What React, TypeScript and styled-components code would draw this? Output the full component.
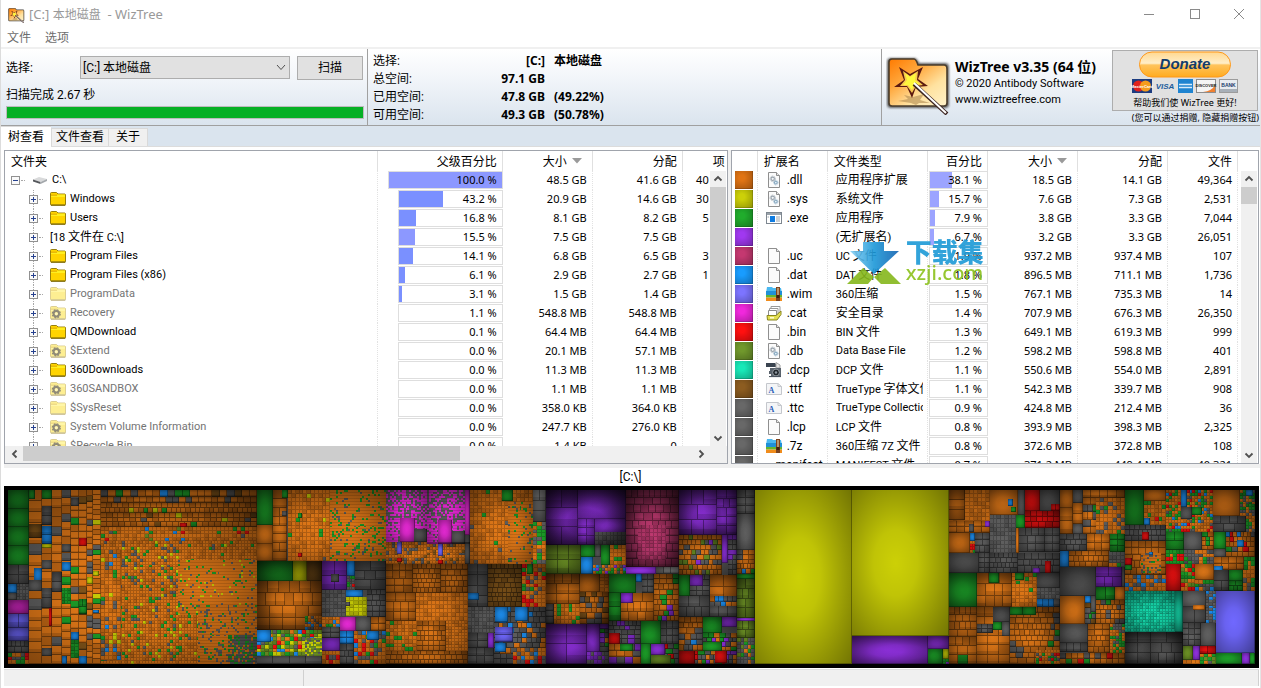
import React, { useMemo } from "react";
import styled, { createGlobalStyle } from "styled-components";

const UI = 'Roboto, "Noto Sans CJK SC", sans-serif';
const WIDE = '"Noto Sans", "Noto Sans CJK SC", sans-serif';

const Global = createGlobalStyle`
  * { box-sizing: border-box; }
  html, body { margin: 0; padding: 0; background: #fff; }
  body { font-family: ${UI}; font-size: 11px; line-height: 18px; color: #000; }
  button, select { font: inherit; color: inherit; }
`;

/* ---------- mixed Latin / Han text ---------- */

const Han = styled.span`
  font-size: 12px;
`;

function Label({ text }: { text: string }) {
  const parts = text.split(/([\u4e00-\u9fff]+)/);
  return (
    <>
      {parts.map((p, i) => (i % 2 ? <Han key={i}>{p}</Han> : p))}
    </>
  );
}

/* ---------- window frame ---------- */

const Window = styled.div`
  display: flex;
  flex-direction: column;
  height: 100vh;
  min-height: 560px;
  overflow: hidden;
  border-left: 1px solid #dcdcdc;
  border-right: 1px solid #e4e4e4;
  background: #fff;
`;

const TitleBar = styled.header`
  display: flex;
  align-items: center;
  flex: none;
  height: 28px;
  padding-left: 7px;
  color: #999;
`;

const TitleText = styled.h1`
  flex: 1;
  margin: 0 0 0 4px;
  font-family: ${WIDE};
  font-size: 13px;
  font-weight: 400;
  white-space: pre;
`;

const WinButton = styled.button`
  display: flex;
  align-items: center;
  justify-content: center;
  width: 46px;
  height: 28px;
  padding: 0;
  border: 0;
  background: none;
  &:last-child { width: 42px; }
`;

const MenuBar = styled.nav`
  display: flex;
  flex: none;
  gap: 14px;
  height: 21px;
  padding-left: 6px;
  border-bottom: 2px solid #f0f0f0;
`;

const MenuItem = styled.button`
  padding: 0;
  border: 0;
  background: none;
  color: #6d6d6d;
  font-size: 12px;
  line-height: 20px;
`;

/* ---------- information strip ---------- */

const InfoStrip = styled.section`
  display: flex;
  flex: none;
  height: 77px;
  border-bottom: 1px solid #a0a0a0;
  background: linear-gradient(#fff 0%, #f3f6fa 35%, #dae4ee 100%);
`;

const ScanPane = styled.div`
  display: flex;
  flex-direction: column;
  width: 367px;
  padding: 7px 3px 0 5px;
  border-right: 1px solid #a0a0a0;
`;

const ScanRow = styled.div`
  display: flex;
  align-items: center;
  height: 23px;
  font-size: 12px;
`;

const ScanLabel = styled.label`
  width: 74px;
`;

const SelectWrap = styled.div`
  position: relative;
  display: flex;
  width: 210px;
  margin-right: 7px;
`;

const DriveSelect = styled.select`
  appearance: none;
  width: 100%;
  height: 23px;
  padding: 0 2px;
  border: 1px solid #adadad;
  border-radius: 0;
  background: #e1e1e1;
  font-size: 12px;
`;

const SelectArrow = styled.svg`
  position: absolute;
  right: 4px;
  top: 8px;
  pointer-events: none;
`;

const ScanButton = styled.button`
  width: 66px;
  height: 24px;
  padding: 0;
  border: 1px solid #adadad;
  background: #e1e1e1;
  font-size: 12px;
`;

const ScanStatus = styled.div`
  margin-top: 7px;
  height: 20px;
  font-size: 12px;
`;

const Progress = styled.div`
  height: 13px;
  width: 358px;
  border: 1px solid #bcbcbc;
  background: #06b025;
`;

const SpacePane = styled.dl`
  display: grid;
  grid-template-columns: 80px 92px 1fr;
  grid-auto-rows: 18px;
  flex: 1;
  margin: 0;
  padding: 3px 0 0 5px;
  font-size: 12px;
`;

const SpaceLabel = styled.dt`
  margin: 0;
`;

const SpaceValue = styled.dd<{ $right?: boolean }>`
  margin: 0;
  padding-left: ${(p) => (p.$right ? 0 : 9)}px;
  text-align: ${(p) => (p.$right ? "right" : "left")};
  font-family: ${WIDE};
  font-size: 12px;
  font-weight: 700;
`;

const AboutPane = styled.div`
  display: flex;
  width: 379px;
  padding-left: 4px;
  border-left: 1px solid #a0a0a0;
`;

const AboutText = styled.div`
  flex: 1;
  padding: 9px 0 0 3px;
  white-space: nowrap;
`;

const AboutTitle = styled.h2`
  margin: 0;
  font-family: ${WIDE};
  font-size: 14px;
  line-height: 18px;
`;

const AboutLine = styled.a`
  display: block;
  color: #000;
  font-size: 11px;
  line-height: 16px;
  text-decoration: none;
`;

const DonatePane = styled.div`
  display: flex;
  flex-direction: column;
  align-items: flex-end;
  width: 148px;
  padding-top: 1px;
  font-family: ${WIDE};
  font-size: 9px;
`;

const DonateButton = styled.button`
  display: flex;
  flex-direction: column;
  align-items: center;
  width: 146px;
  height: 61px;
  margin-right: 2px;
  padding: 0;
  border: 1px solid #adadad;
  background: #e1e1e1;
  font-size: 9px;
  line-height: 14px;
`;

const DonateNote = styled.div`
  margin-right: 1px;
  line-height: 13px;
  white-space: nowrap;
`;

/* ---------- tabs ---------- */

const Tabs = styled.div`
  display: flex;
  align-items: flex-end;
  flex: none;
  height: 21px;
  border-bottom: 1px solid #dcdcdc;
  background: #dae4ee;
`;

const Tab = styled.button<{ $active?: boolean }>`
  height: ${(p) => (p.$active ? 21 : 18)}px;
  margin-bottom: ${(p) => (p.$active ? -1 : 0)}px;
  padding: ${(p) => (p.$active ? "0 7px" : "0 4px")};
  min-width: 40px;
  border: 1px solid #d9d9d9;
  border-left-width: ${(p) => (p.$active ? 0 : 1)}px;
  border-right-width: 0;
  border-bottom: 0;
  background: ${(p) => (p.$active ? "#fff" : "#f0f0f0")};
  font-size: 12px;
  line-height: 17px;
  &:last-child { border-right-width: 1px; }
`;

/* ---------- tables ---------- */

const Panels = styled.main`
  display: flex;
  flex: 1;
  gap: 3px;
  min-height: 0;
  margin: 3px 1px 0 3px;
  background: #f0f0f0;
`;

const Panel = styled.section<{ $grow: number }>`
  display: flex;
  flex-direction: column;
  flex: ${(p) => p.$grow} 1 0;
  min-width: 0;
  border: 1px solid #a0a4ac;
  background: #fff;
`;

const Viewport = styled.div`
  position: relative;
  flex: 1;
  min-height: 0;
  overflow: hidden;
`;

const Grid = styled.table`
  width: 100%;
  table-layout: fixed;
  border-collapse: separate;
  border-spacing: 0;
`;

const Head = styled.th<{ $right?: boolean; $pad?: number }>`
  height: 20px;
  padding: 2px ${(p) => (p.$right ? p.$pad ?? 5 : 0)}px 0 ${(p) => (p.$right ? 0 : p.$pad ?? 6)}px;
  border-right: 1px solid #e0e0e0;
  text-align: ${(p) => (p.$right ? "right" : "left")};
  vertical-align: top;
  font-size: 12px;
  font-weight: 400;
  line-height: 18px;
  white-space: nowrap;
  &:last-child { border-right: 0; }
`;

const SortArrow = styled.svg`
  margin: 0 5px 2px 5px;
`;

const Cell = styled.td<{ $right?: boolean; $pad?: number }>`
  height: 19px;
  padding: 0 ${(p) => (p.$right ? p.$pad ?? 5 : 4)}px 0 ${(p) => (p.$right ? 0 : p.$pad ?? 5)}px;
  border-right: 1px dotted #e2e2e2;
  text-align: ${(p) => (p.$right ? "right" : "left")};
  vertical-align: top;
  line-height: 18px;
  white-space: nowrap;
  overflow: hidden;
  &:last-child { border-right: 0; }
`;

const Clip = styled.div`
  height: 18px;
  overflow: hidden;
`;

const TreeCell = styled(Cell)<{ $child?: boolean }>`
  padding-left: ${(p) => (p.$child ? 24 : 6)}px;
  background: ${(p) =>
    p.$child
      ? "repeating-linear-gradient(to bottom, #a8a8a8 0 1px, transparent 1px 2px) 28px 0 / 1px 100% no-repeat"
      : "none"};
`;

const TreeRow = styled.div<{ $dim?: boolean }>`
  display: flex;
  align-items: center;
  gap: 4px;
  height: 18px;
  color: ${(p) => (p.$dim ? "#747474" : "#000")};
`;

const Toggle = styled.button`
  display: flex;
  padding: 0;
  border: 0;
  background: none;
`;

const Dots = styled.span`
  width: 4px;
  margin: 0 3px 0 -3px;
  border-top: 1px dotted #a8a8a8;
`;

const BarCell = styled.td<{ $indent?: number }>`
  height: 19px;
  padding: 0 0 1px ${(p) => p.$indent ?? 1}px;
  vertical-align: top;
`;

const Bar = styled.div`
  position: relative;
  height: 18px;
  border: 1px solid #dedede;
  background: #fff;
  line-height: 16px;
  text-align: right;
`;

const BarFill = styled.div<{ $color: string }>`
  position: absolute;
  left: 0;
  top: 0;
  height: 16px;
  background: ${(p) => p.$color};
`;

const BarText = styled.span`
  position: relative;
  padding-right: 5px;
  font-family: ${WIDE};
`;

const Num = styled.span`
  font-family: ${WIDE};
`;

const Swatch = styled.div<{ $color: string }>`
  width: 18px;
  height: 18px;
  background: radial-gradient(circle at 40% 40%, transparent 20%, rgba(0, 0, 0, 0.28)) ${(p) => p.$color};
  border-right: 1px solid rgba(0, 0, 0, 0.25);
  border-bottom: 1px solid rgba(0, 0, 0, 0.25);
`;

const ExtRow = styled.div`
  display: flex;
  align-items: center;
  gap: 5px;
  height: 18px;
  font-size: 12px;
`;

const VScroll = styled.div`
  position: absolute;
  right: 1px;
  top: 20px;
  bottom: 0;
  display: flex;
  flex-direction: column;
  width: 16px;
  background: #f0f0f0;
`;

const HScroll = styled.div`
  display: flex;
  flex: none;
  height: 17px;
  padding: 0 18px 2px 2px;
  background: #f0f0f0;
`;

const ScrollButton = styled.button`
  display: flex;
  flex: none;
  align-items: center;
  justify-content: center;
  width: 16px;
  height: 16px;
  padding: 0;
  border: 0;
  background: none;
`;

const Thumb = styled.div<{ $grow: number }>`
  flex: ${(p) => p.$grow} 1 0;
  background: #cdcdcd;
`;

const Rest = styled.div<{ $grow: number }>`
  flex: ${(p) => p.$grow} 1 0;
`;

/* ---------- watermark ---------- */

const Watermark = styled.div`
  position: absolute;
  left: 115px;
  top: 90px;
  display: flex;
  gap: 5px;
  opacity: 0.9;
  pointer-events: none;
`;

const MarkWords = styled.div`
  color: #1c9ad6;
  font-size: 26px;
  font-weight: 900;
  line-height: 24px;
`;

const MarkSite = styled.div`
  color: #8cc21c;
  font-family: ${WIDE};
  font-size: 20px;
  font-weight: 500;
  line-height: 16px;
`;

/* ---------- treemap and status ---------- */

const Splitter = styled.div`
  flex: none;
  height: 4px;
  margin-left: 3px;
  background: #f0f0f0;
`;

const PathLabel = styled.div`
  flex: none;
  height: 18px;
  font-size: 12px;
  text-align: center;
`;

const MapFrame = styled.section`
  flex: none;
  height: 182px;
  margin: 0 1px 0 3px;
  padding: 4px;
  background: #000;
  svg { display: block; width: 100%; height: 100%; }
`;

const StatusBar = styled.footer`
  display: flex;
  flex: none;
  height: 17px;
  margin: 1px 1px 2px 3px;
  border-top: 1px solid #e0e0e0;
  background: #f0f0f0;
`;

const StatusCell = styled.div<{ $wide?: boolean }>`
  flex: ${(p) => (p.$wide ? "1" : "0 0 300px")};
  border-right: 1px solid #d0d0d0;
`;

/* ---------- icons ---------- */

type Dir = "up" | "down" | "left" | "right";
const CHEVRON: Record<Dir, string> = {
  up: "M1.5 6.5 L5 3 L8.5 6.5",
  down: "M1.5 3.5 L5 7 L8.5 3.5",
  left: "M6.5 1.5 L3 5 L6.5 8.5",
  right: "M3.5 1.5 L7 5 L3.5 8.5",
};

function Chevron({ dir }: { dir: Dir }) {
  return (
    <svg width="10" height="10" viewBox="0 0 10 10" fill="none" stroke="#505050" strokeWidth="1.8">
      <path d={CHEVRON[dir]} />
    </svg>
  );
}

function Sort() {
  return (
    <SortArrow width="10" height="6" viewBox="0 0 10 6">
      <path d="M0 0 H10 L5 5.5 Z" fill="#9a9a9a" />
    </SortArrow>
  );
}

function ToggleBox({ open }: { open?: boolean }) {
  return (
    <Toggle aria-label={open ? "收起" : "展开"}>
      <svg width="9" height="9" viewBox="0 0 9 9" shapeRendering="crispEdges">
        <rect x="0.5" y="0.5" width="8" height="8" fill="#fafafa" stroke="#919191" />
        <path d={open ? "M2 4.5 H7" : "M2 4.5 H7 M4.5 2 V7"} stroke="#26418f" />
      </svg>
    </Toggle>
  );
}

type FolderKind = "drive" | "folder" | "pale" | "system" | "none";

function FolderIcon({ kind }: { kind: FolderKind }) {
  if (kind === "none") return null;
  if (kind === "drive")
    return (
      <svg width="16" height="14" viewBox="0 0 16 14">
        <path d="M1 6.5 L7 4 L15 6 L8.5 9 Z" fill="#d9dadb" />
        <path d="M1 6.5 L8.5 9 V11 L1 8.5 Z" fill="#55585c" />
        <path d="M8.5 9 L15 6 V8 L8.5 11 Z" fill="#a4a8ac" />
      </svg>
    );
  const pale = kind !== "folder";
  return (
    <svg width="16" height="14" viewBox="0 0 16 14">
      <path
        d="M0.5 1.5 Q0.5 0.5 1.5 0.5 H6.5 L8 2 H15 L15.5 2.5 V12.5 L15 13.3 H1 L0.5 12.5 Z"
        fill={pale ? "#fdee92" : "#ffd400"}
        stroke={pale ? "#d8c98c" : "#8c7400"}
        strokeWidth="0.9"
      />
      <path d="M1 3.4 H6.8 L8.2 2.4 H15 V5 H1 Z" fill={pale ? "#fff6a8" : "#ffee20"} />
      <path d="M1 3.2 H7" stroke={pale ? "#e2c978" : "#d89c00"} strokeWidth="0.8" />
      <path d="M1 13 H15.4" stroke={pale ? "#b8b09a" : "#6a5a10"} strokeWidth="0.9" />
      {kind === "system" && (
        <g>
          <circle cx="6.3" cy="7.8" r="2.7" fill="none" stroke="#8f8a78" strokeWidth="2" />
          <circle cx="6.3" cy="7.8" r="4" fill="none" stroke="#8f8a78" strokeWidth="1.2" strokeDasharray="1.8 1.34" />
          <circle cx="6.3" cy="7.8" r="1.4" fill="#fff6c0" />
        </g>
      )}
    </svg>
  );
}

type FileKind = "gear" | "exe" | "page" | "zip" | "cat" | "dcp" | "font" | "none";

function FileIcon({ kind }: { kind: FileKind }) {
  const page = (
    <>
      <path d="M2.5 0.5 H10.5 L13.5 3.5 V15.5 H2.5 Z" fill="#fbfbfb" stroke="#8f8f8f" />
      <path d="M10.5 0.5 V3.5 H13.5" fill="#e6e6e6" stroke="#8f8f8f" />
    </>
  );
  return (
    <svg width="16" height="16" viewBox="0 0 16 16">
      {kind === "page" && page}
      {kind === "gear" && (
        <>
          {page}
          <circle cx="6.7" cy="6.8" r="1.7" fill="#f4f7f9" stroke="#98a2ac" strokeWidth="1.1" />
          <circle cx="6.7" cy="6.8" r="2.7" fill="none" stroke="#98a2ac" strokeWidth="0.8" strokeDasharray="1 0.7" />
          <circle cx="9.8" cy="10.6" r="1.4" fill="#e6f2fa" stroke="#86a8c0" strokeWidth="1.1" />
          <circle cx="9.8" cy="10.6" r="2.3" fill="none" stroke="#86a8c0" strokeWidth="0.7" strokeDasharray="0.9 0.6" />
        </>
      )}
      {kind === "exe" && (
        <>
          <rect x="0.5" y="2.5" width="15" height="11" fill="#fff" stroke="#7e8790" />
          <path d="M1 4 H15" stroke="#9aa3ab" strokeWidth="2" />
          <rect x="4" y="6" width="5" height="6" fill="#0f7be0" />
          <path d="M10 7 H14 M10 9 H14 M10 11 H14" stroke="#9aa3ab" />
          <path d="M1.5 7 H3" stroke="#9aa3ab" />
        </>
      )}
      {kind === "zip" && (
        <>
          <path d="M1 1 H6 L7 2 H15 L16 7 H0 Z" fill="#4ab8f0" />
          <path d="M0 5 H16 V9 H0 Z" fill="#1f90d8" />
          <rect x="0" y="9" width="16" height="2.6" fill="#63b532" />
          <rect x="0" y="11.6" width="16" height="3.4" fill="#f08c1c" />
          <rect x="10" y="1" width="4" height="14" fill="#7c4420" />
          <rect x="11.2" y="2" width="1.6" height="7" fill="#c8a880" />
          <rect x="10.4" y="9" width="3.2" height="3" fill="#40200c" />
        </>
      )}
      {kind === "cat" && (
        <>
          <path d="M5 1.5 H14 V8 H5 Z" fill="#fff" stroke="#9a9a9a" />
          <path d="M3.5 3.5 H12 V10 H3.5 Z" fill="#fff" stroke="#9a9a9a" />
          <path d="M2.5 5.5 H10.5 V12 H2.5 Z" fill="#fff" stroke="#8c8c8c" />
          <path d="M1 10.5 H10 L15 6 V9.5 L11 15 H1.5 Z" fill="#e4e050" stroke="#8a8620" />
          <path d="M4 12.8 H8" stroke="#fffde0" strokeWidth="1.4" />
        </>
      )}
      {kind === "dcp" && (
        <>
          <path d="M0 1 H9 L11 3 V5 H0 Z" fill="#3a4450" />
          <path d="M10 0.5 L14 3 V6 H10 Z" fill="#e4e4e4" stroke="#a0a0a0" />
          <path d="M4 6 H15 V14 H5 V12 H3 V9 H4 Z" fill="#59626c" />
          <circle cx="10" cy="10.5" r="3.4" fill="#20262c" stroke="#aab0b6" strokeWidth="0.8" />
          <circle cx="10" cy="10.5" r="1.2" fill="#8d969e" />
          <path d="M3 14.6 H15" stroke="#3a4450" />
        </>
      )}
      {kind === "font" && (
        <>
          <path d="M0.5 2.5 H12 L15.5 5.5 V13.5 H0.5 Z" fill="#f4f5f7" stroke="#c4c7cc" />
          <path d="M12 2.5 V5.5 H15.5" fill="none" stroke="#c4c7cc" />
          <text x="2.6" y="12" fontFamily="Liberation Serif, serif" fontSize="8" fontWeight="700" fill="#2a5cb8">
            A
          </text>
        </>
      )}
    </svg>
  );
}

function WizLogo({ size }: { size: number }) {
  return (
    <svg width={size} height={size} viewBox="0 0 66 66">
      <defs>
        <linearGradient id="folderFill" x1="0" y1="0" x2="0.9" y2="1">
          <stop offset="0" stopColor="#ff7a00" />
          <stop offset="0.35" stopColor="#ffa63a" />
          <stop offset="0.7" stopColor="#ffe2a0" />
          <stop offset="1" stopColor="#fff0c4" />
        </linearGradient>
        <filter id="soft" x="-20%" y="-20%" width="140%" height="140%">
          <feGaussianBlur stdDeviation="1.2" />
        </filter>
      </defs>
      <g transform="translate(0 5)">
        <path d="M1 8 Q1 4 5 4 H28 Q31 4 33 9 H59 Q63 9 63 13 V50 Q63 54 59 54 H5 Q1 54 1 50 Z" fill="#333" opacity="0.75" filter="url(#soft)" />
        <path
          d="M3 8 Q3 5 6 5 H28 Q30 5 32 11 H58 Q61 11 61 15 V49 Q61 52 58 52 H6 Q3 52 3 49 Z"
          fill="url(#folderFill)"
          stroke="#4a3c2c"
          strokeWidth="1.6"
        />
        <path d="M12 47 L22 45 L18 41 L27 43 L38 40 L34 46 L44 49 L33 49 L30 51 L25 49 Z" fill="#b08a50" opacity="0.6" />
        <path d="M13 13 L24 20 L37 13 L32 25 L42 32 L30 33 L26 44 L21 33 L8 33 L18 26 Z" fill="#5c1a10" />
        <path d="M17 17 L24 22 L32 17 L31 26 L37 31 L30 32 L26 39 L21 32 L14 32 L19 26 Z" fill="#f8c850" />
        <path d="M19 19 L24 23 L30 19 L29 26 L34 30 L28 31 L26 36 L22 31 L17 31 L21 26 Z" fill="#fff83c" />
        <path d="M28 30 L61 60" stroke="#3c2420" strokeWidth="4" />
        <path d="M28 29 L60 59" stroke="#fff" strokeWidth="2" />
      </g>
    </svg>
  );
}

function DonateBadge() {
  return (
    <svg width="108" height="45" viewBox="0 0 108 45">
      <defs>
        <linearGradient id="gold" x1="0" y1="0" x2="0" y2="1">
          <stop offset="0" stopColor="#ffd890" />
          <stop offset="0.45" stopColor="#ffeec8" />
          <stop offset="0.52" stopColor="#ffc45c" />
          <stop offset="1" stopColor="#ffab20" />
        </linearGradient>
      </defs>
      <rect x="8.5" y="1" width="91" height="25" rx="12.5" fill="url(#gold)" stroke="#ff9818" />
      <text x="54" y="18" textAnchor="middle" fontFamily="Liberation Sans, sans-serif" fontSize="15" fontWeight="700" fontStyle="italic" fill="#123c6c">
        Donate
      </text>
      <rect x="1" y="28" width="20" height="14" fill="#1c3c80" />
      <circle cx="7.5" cy="35" r="5.5" fill="#e0201c" />
      <circle cx="14.5" cy="35" r="5.5" fill="#f49c1c" />
      <text x="11" y="37" textAnchor="middle" fontFamily="Liberation Sans, sans-serif" fontSize="4" fontWeight="700" fill="#fff">MasterCard</text>
      <text x="34" y="38" textAnchor="middle" fontFamily="Liberation Sans, sans-serif" fontSize="8" fontWeight="700" fontStyle="italic" fill="#1c5c9c">VISA</text>
      <rect x="47" y="28" width="15" height="14" fill="#1f84d0" />
      <path d="M48 33.5 H61 M48 36.5 H61" stroke="#d8ecfa" strokeWidth="1.6" />
      <rect x="65.5" y="28.5" width="19" height="13" fill="#f4f4f4" stroke="#8c8c8c" />
      <path d="M72 41 Q81 40 84 34 V41 Z" fill="#f08030" />
      <text x="75" y="36" textAnchor="middle" fontFamily="Liberation Sans, sans-serif" fontSize="4" fontWeight="700" fill="#222">DISCOVER</text>
      <rect x="88.5" y="28.5" width="18" height="13" fill="#e8ecf0" stroke="#9c9c9c" />
      <path d="M89 39.5 H106" stroke="#a8b0b8" strokeWidth="3" />
      <text x="97.5" y="36" textAnchor="middle" fontFamily="Liberation Sans, sans-serif" fontSize="5" fontWeight="700" fill="#1c3c6c">BANK</text>
    </svg>
  );
}

/* ---------- data ---------- */

type Folder = [string, FolderKind, number, string, string, string];

const FOLDERS: Folder[] = [
  ["C:\\", "drive", 100, "48.5 GB", "41.6 GB", "40"],
  ["Windows", "folder", 43.2, "20.9 GB", "14.6 GB", "30"],
  ["Users", "folder", 16.8, "8.1 GB", "8.2 GB", "5"],
  ["[18 文件在 C:\\]", "none", 15.5, "7.5 GB", "7.5 GB", ""],
  ["Program Files", "folder", 14.1, "6.8 GB", "6.5 GB", "3"],
  ["Program Files (x86)", "folder", 6.1, "2.9 GB", "2.7 GB", "1"],
  ["ProgramData", "pale", 3.1, "1.5 GB", "1.4 GB", ""],
  ["Recovery", "system", 1.1, "548.8 MB", "548.8 MB", ""],
  ["QMDownload", "folder", 0.1, "64.4 MB", "64.4 MB", ""],
  ["$Extend", "system", 0, "20.1 MB", "57.1 MB", ""],
  ["360Downloads", "folder", 0, "11.3 MB", "11.3 MB", ""],
  ["360SANDBOX", "system", 0, "1.1 MB", "1.1 MB", ""],
  ["$SysReset", "pale", 0, "358.0 KB", "364.0 KB", ""],
  ["System Volume Information", "system", 0, "247.7 KB", "276.0 KB", ""],
  ["$Recycle.Bin", "system", 0, "1.4 KB", "0", ""],
];

type Ext = [string, FileKind, string, string, number, string, string, string];

const EXTS: Ext[] = [
  ["#e07414", "gear", ".dll", "应用程序扩展", 38.1, "18.5 GB", "14.1 GB", "49,364"],
  ["#ccd008", "gear", ".sys", "系统文件", 15.7, "7.6 GB", "7.3 GB", "2,531"],
  ["#20ac2c", "exe", ".exe", "应用程序", 7.9, "3.8 GB", "3.3 GB", "7,044"],
  ["#a038f0", "none", "", "(无扩展名)", 6.7, "3.2 GB", "3.3 GB", "26,051"],
  ["#c43870", "page", ".uc", "UC 文件", 1.9, "937.2 MB", "937.4 MB", "107"],
  ["#189cff", "page", ".dat", "DAT 文件", 1.8, "896.5 MB", "711.1 MB", "1,736"],
  ["#7c74ff", "zip", ".wim", "360压缩", 1.5, "767.1 MB", "735.3 MB", "14"],
  ["#f028dc", "cat", ".cat", "安全目录", 1.4, "707.9 MB", "676.3 MB", "26,350"],
  ["#ff1010", "page", ".bin", "BIN 文件", 1.3, "649.1 MB", "619.3 MB", "999"],
  ["#70982c", "gear", ".db", "Data Base File", 1.2, "598.2 MB", "598.8 MB", "401"],
  ["#18e8b8", "dcp", ".dcp", "DCP 文件", 1.1, "550.6 MB", "554.0 MB", "2,891"],
  ["#8c5c20", "font", ".ttf", "TrueType 字体文件", 1.1, "542.3 MB", "339.7 MB", "908"],
  ["#686868", "font", ".ttc", "TrueType Collection", 0.9, "424.8 MB", "212.4 MB", "36"],
  ["#686868", "page", ".lcp", "LCP 文件", 0.8, "393.9 MB", "398.3 MB", "2,325"],
  ["#686868", "zip", ".7z", "360压缩 7Z 文件", 0.8, "372.6 MB", "372.8 MB", "108"],
  ["#686868", "page", ".manifest", "MANIFEST 文件", 0.7, "371.2 MB", "449.4 MB", "40,321"],
];

const SPACE: [string, string, string][] = [
  ["选择:", "[C:]", "本地磁盘"],
  ["总空间:", "97.1 GB", ""],
  ["已用空间:", "47.8 GB", "(49.22%)"],
  ["可用空间:", "49.3 GB", "(50.78%)"],
];

/* ---------- treemap ---------- */

const HUES: Record<string, string> = {
  o: "#e47a18", g: "#1c9e28", k: "#606060", y: "#ccd006", p: "#8e30dc", r: "#c23a72",
  b: "#1c8cec", v: "#7068ff", m: "#ea2ad8", R: "#ec1010", l: "#6a8e24", t: "#16dcae", n: "#84561a",
};

/* x, y, width, height, hue, cell size, share of other cells, their hues */
type Block = [number, number, number, number, string, number?, number?, string?];

const BLOCKS: Block[] = [
  [0, 0, 21, 19, "g"], [0, 19, 21, 18, "g"], [0, 37, 21, 19, "g"], [0, 56, 21, 19, "g"],
  [0, 75, 21, 19, "k", 11], [9, 94, 12, 16, "k", 3], [0, 94, 9, 9, "b"], [0, 103, 9, 7, "k"],
  [0, 110, 21, 14, "m", 12], [0, 124, 21, 14, "v", 11], [0, 138, 21, 13, "v", 11], [0, 151, 21, 12, "k", 6],
  [0, 163, 21, 11, "o", 4, 0.5, "gkR"],
  [21, 0, 13, 174, "o", 11, 0.12, "kk"], [21, 0, 6, 9, "g"], [21, 34, 13, 14, "n", 12], [26, 78, 8, 13, "b"], [21, 90, 13, 11, "k"],
  [34, 0, 10, 174, "o", 9], [34, 0, 10, 9, "g"], [34, 16, 10, 19, "k", 9], [34, 36, 10, 18, "b", 9], [34, 54, 10, 4, "y"],
  [34, 70, 10, 9, "k"], [34, 98, 10, 20, "k", 9], [41, 118, 3, 18, "R"], [34, 158, 10, 8, "k"],
  [44, 0, 10, 174, "o", 9, 0.18, "k"], [44, 82, 10, 20, "k", 10],
  [54, 0, 9, 174, "o", 8, 0.15, "kg"], [54, 54, 9, 8, "k"], [54, 72, 9, 9, "b"], [54, 98, 9, 16, "g", 3], [54, 166, 5, 8, "b"],
  [63, 0, 8, 174, "o", 7, 0.25, "nkg"], [63, 8, 8, 8, "k"], [63, 142, 8, 8, "b"], [63, 150, 8, 18, "g", 4],
  [71, 0, 8, 174, "o", 7, 0.3, "kn"], [71, 48, 8, 8, "R"], [71, 109, 8, 15, "g", 7], [71, 166, 8, 8, "b"],
  [79, 0, 6, 174, "o", 6, 0.2, "knkk"], [79, 87, 6, 7, "y"],
  [85, 0, 8, 174, "o", 5, 0.16, "kgy"], [85, 81, 6, 5, "y"], [85, 120, 6, 3, "b"],
  [93, 0, 156, 7, "o", 7, 0.5, "kybgn"], [93, 7, 156, 6, "o", 6, 0.28, "kyn"], [93, 13, 156, 10, "o", 5, 0.1, "gyk"],
  [93, 23, 156, 14, "o", 5, 0.14, "gkykn"], [93, 37, 156, 14, "o", 4, 0.13, "gkRbl"],
  [93, 51, 156, 50, "o", 3, 0.17, "gkykgk"], [93, 101, 156, 73, "o", 3, 0.12, "gkyg"],
  [93, 60, 20, 110, "o", 4, 0.2, "gykbk"], [170, 70, 79, 55, "o", 2, 0.13, "gkgyk"], [190, 115, 59, 59, "o", 2, 0.2, "gkk"],
  [220, 145, 29, 29, "k", 2, 0.45, "og"], [172, 33, 7, 4, "R"],
  [249, 0, 16, 35, "g"], [249, 35, 16, 19, "o"], [249, 54, 16, 17, "o"], [265, 0, 14, 71, "o", 9], [274, 0, 6, 8, "g"], [274, 21, 5, 5, "k"],
  [280, 0, 46, 71, "o", 4, 0.05, "gyk"], [322, 0, 56, 71, "o", 2, 0.16, "gkg"],
  [290, 63, 4, 4, "R"], [290, 23, 4, 5, "g"],
  [249, 71, 36, 20, "g"], [285, 71, 14, 20, "y"], [299, 71, 15, 20, "n"],
  [249, 91, 65, 49, "o", 12], [297, 126, 17, 14, "o", 3, 0.4, "kgb"],
  [249, 140, 65, 26, "l", 4, 0.6, "obgyRky"], [249, 140, 14, 12, "b"], [297, 148, 17, 18, "l", 2, 0.4, "ky"], [249, 166, 65, 8, "k", 17],
  [314, 71, 25, 29, "p", 12], [323, 84, 8, 8, "k"], [339, 71, 8, 15, "b"], [339, 86, 8, 14, "k", 3, 0.3, "gR"], [347, 71, 31, 29, "k", 10],
  [314, 100, 24, 27, "k", 4], [338, 100, 17, 7, "b"], [338, 107, 21, 19, "y", 4], [338, 112, 4, 4, "k"], [359, 100, 19, 27, "k", 5],
  [314, 127, 18, 10, "o", 4, 0.2, "bg"], [332, 127, 16, 14, "m"], [348, 127, 15, 14, "k"], [363, 127, 15, 14, "o", 6],
  [314, 137, 18, 11, "k", 7], [314, 148, 18, 13, "p"], [314, 161, 18, 13, "o", 4, 0.4, "kR"],
  [332, 141, 14, 13, "b", 7], [332, 154, 14, 20, "k", 7], [346, 141, 32, 33, "o", 4, 0.5, "kbgkR"], [359, 141, 12, 9, "b"],
  [378, 0, 41, 30, "m", 2, 0.5, "kk"], [378, 30, 41, 22, "m", 2, 0.25, "kk"], [392, 28, 15, 24, "m"], [406, 39, 13, 13, "k"],
  [419, 0, 38, 30, "m", 2, 0.5, "kk"], [419, 30, 38, 24, "m", 2, 0.25, "kk"], [430, 30, 14, 24, "m"], [444, 41, 13, 13, "k"], [457, 0, 5, 45, "m"], [457, 45, 5, 29, "k"],
  [378, 52, 41, 22, "o", 3, 0.3, "knk"], [389, 52, 5, 12, "v"], [389, 68, 5, 4, "R"],
  [419, 54, 38, 20, "o", 3, 0.3, "knk"], [430, 54, 5, 12, "v"], [430, 70, 5, 4, "R"],
  [378, 74, 27, 29, "o", 8], [405, 74, 28, 29, "o", 5], [433, 74, 27, 29, "o", 6], [378, 103, 30, 28, "o", 9], [408, 103, 52, 28, "o", 4],
  [378, 131, 31, 30, "o", 4, 0.06, "g"], [409, 131, 29, 30, "o", 5, 0.06, "kg"], [438, 131, 22, 30, "o", 3], [378, 161, 82, 13, "o", 5, 0.08, "k"],
  [462, 0, 63, 74, "o", 4, 0.05, "gk"], [494, 0, 11, 11, "g"], [500, 12, 25, 62, "o", 2, 0.14, "gk"], [525, 0, 13, 32, "k", 10], [525, 32, 13, 42, "o", 4, 0.4, "gk"],
  [460, 74, 20, 43, "k", 10], [480, 74, 34, 43, "n", 5], [514, 74, 24, 43, "o", 4, 0.4, "gkR"], [519, 74, 6, 10, "g"], [460, 103, 11, 7, "b"],
  [460, 117, 26, 26, "k", 4], [460, 143, 20, 15, "k", 9], [480, 143, 6, 15, "p"], [460, 158, 26, 16, "k", 8],
  [486, 117, 52, 57, "k", 5, 0.25, "obko"], [487, 117, 13, 15, "b"], [507, 117, 13, 14, "b"], [487, 137, 18, 15, "v", 9], [487, 153, 11, 9, "b"], [505, 158, 33, 16, "o", 4, 0.4, "kkbR"],
  [538, 0, 32, 55, "p", 18], [570, 0, 48, 29, "p"], [570, 29, 17, 26, "p", 9], [587, 29, 31, 14, "p"], [587, 42, 31, 13, "k", 4, 0.1, "p"],
  [538, 55, 35, 29, "l", 12], [573, 55, 14, 12, "g"], [573, 67, 12, 17, "b"], [587, 55, 6, 12, "k"], [593, 55, 9, 20, "g"], [602, 55, 16, 20, "o", 4, 0.1, "g"], [585, 75, 33, 9, "o", 3, 0.6, "gkpb"],
  [618, 0, 53, 77, "r", 8], [630, 35, 28, 35, "r", 4], [618, 77, 30, 7, "p"], [648, 77, 23, 7, "k", 8, 0.3, "p"],
  [671, 0, 38, 45, "p", 14], [709, 0, 20, 45, "p", 9], [671, 45, 43, 40, "o", 5, 0.35, "kklp"], [714, 45, 6, 28, "p"], [720, 45, 9, 40, "k", 5, 0.3, "p"],
  [729, 0, 18, 24, "k", 9], [729, 24, 18, 36, "k"], [729, 60, 18, 24, "o", 5, 0.25, "bkg"], [729, 84, 18, 5, "g"], [729, 89, 18, 39, "l", 9], [729, 128, 18, 3, "p"], [729, 131, 18, 17, "l", 8], [729, 148, 18, 26, "k", 4, 0.4, "olg"],
  [538, 84, 34, 30, "o", 11], [538, 114, 34, 20, "o", 4, 0.2, "g"], [538, 114, 8, 20, "k", 8], [572, 84, 20, 18, "o"], [592, 84, 9, 18, "o", 4, 0.3, "bR"], [572, 102, 29, 32, "o", 5, 0.35, "kkn"],
  [601, 84, 27, 19, "g"], [628, 84, 6, 8, "b"], [634, 84, 12, 19, "k", 6], [646, 84, 25, 47, "o", 5, 0.2, "gpg"], [601, 103, 12, 28, "g", 13], [613, 103, 33, 28, "o", 9, 0.1, "k"], [613, 103, 12, 10, "p"],
  [601, 131, 32, 23, "k", 5, 0.25, "p"], [601, 143, 11, 11, "R"], [633, 131, 20, 23, "g"], [653, 131, 18, 23, "k", 7],
  [601, 154, 32, 20, "o", 7, 0.3, "kpk"], [612, 154, 13, 7, "g"], [633, 154, 38, 20, "k", 5, 0.4, "opgR"], [633, 154, 10, 20, "g"], [643, 154, 14, 11, "p"], [643, 165, 20, 9, "l"],
  [538, 134, 41, 40, "p", 20], [579, 134, 13, 28, "p"], [579, 162, 22, 12, "p", 4, 0.2, "k"], [592, 134, 9, 28, "k", 5, 0.6, "pog"],
  [671, 85, 11, 21, "g"], [682, 85, 20, 21, "k", 6, 0.4, "gk"], [682, 85, 13, 11, "p"], [702, 85, 27, 23, "o", 13], [702, 106, 27, 11, "o", 5, 0.4, "kb"], [671, 106, 31, 21, "k", 9], [702, 116, 27, 11, "k", 9],
  [671, 127, 24, 34, "o", 6, 0.35, "kbk"], [695, 127, 19, 16, "g"], [714, 127, 15, 10, "p"], [695, 143, 34, 18, "k", 5, 0.5, "pgo"], [695, 152, 19, 9, "g"],
  [671, 161, 58, 13, "k", 5, 0.5, "ogRp"], [671, 161, 16, 13, "R", 10], [707, 161, 12, 12, "R"],
  [747, 0, 97, 174, "y"], [844, 0, 97, 146, "y"], [844, 146, 76, 28, "p"], [920, 146, 21, 13, "p"], [920, 159, 15, 15, "g"], [935, 159, 6, 10, "y"], [935, 169, 6, 5, "g", 3, 0.4, "p"],
  [941, 0, 41, 31, "o", 4], [941, 0, 16, 30, "o", 10], [941, 31, 41, 12, "o", 7], [961, 34, 5, 8, "k"], [977, 31, 5, 6, "p"], [982, 0, 28, 25, "o"], [1000, 9, 5, 7, "b"], [1003, 17, 5, 5, "g"], [1010, 0, 7, 25, "k"],
  [1017, 0, 15, 21, "R"], [1032, 0, 20, 21, "k"], [1017, 21, 35, 17, "R", 6], [1043, 14, 9, 7, "R", 5], [982, 25, 26, 13, "k", 4], [1008, 25, 9, 13, "g"],
  [941, 43, 21, 20, "o"], [962, 43, 5, 8, "b"], [962, 51, 5, 12, "o", 3, 0.4, "gR"], [967, 43, 15, 20, "k", 6], [982, 38, 26, 25, "k", 4], [1008, 38, 3, 25, "o"], [1011, 38, 26, 24, "k", 8], [1037, 38, 15, 24, "k", 9],
  [941, 63, 30, 20, "k"], [971, 63, 11, 20, "k", 5], [982, 63, 28, 20, "k", 5], [1010, 63, 42, 20, "k", 7], [1037, 71, 6, 12, "R"], [1025, 78, 7, 5, "p"],
  [941, 83, 28, 34, "g"], [969, 83, 35, 34, "o", 11], [1004, 83, 25, 34, "o", 4, 0.05, "g"], [981, 83, 10, 10, "g"], [1007, 83, 9, 7, "g"], [1029, 83, 23, 15, "k"], [1029, 98, 23, 11, "k", 4], [1029, 109, 23, 8, "b", 7, 0.3, "k"],
  [941, 117, 28, 30, "o", 7], [941, 147, 28, 27, "o", 8, 0.08, "kg"], [969, 117, 33, 57, "o", 9, 0.12, "kg"], [1002, 117, 50, 57, "o", 6, 0.2, "kkg"], [985, 117, 17, 15, "k"], [969, 134, 16, 9, "k", 6], [985, 132, 9, 8, "g"], [994, 132, 8, 14, "k"], [1002, 117, 13, 8, "g"], [1015, 117, 13, 8, "g"], [1028, 160, 24, 14, "o", 3, 0.4, "gkR"],
  [1052, 0, 13, 18, "o"], [1052, 18, 13, 26, "o", 11], [1065, 0, 10, 13, "k"], [1065, 13, 10, 21, "o", 10], [1065, 34, 10, 10, "k"], [1075, 0, 42, 8, "o", 10], [1075, 8, 15, 36, "o", 7, 0.5, "kkg"], [1088, 8, 29, 36, "o", 4, 0.25, "kkg"],
  [1052, 44, 27, 17, "k", 6], [1079, 44, 23, 17, "o", 7], [1102, 44, 15, 18, "g", 7], [1052, 61, 9, 16, "b"], [1061, 61, 40, 16, "o", 6], [1101, 62, 16, 15, "k", 4, 0.4, "og"],
  [1052, 77, 36, 29, "k"], [1088, 77, 26, 20, "p", 9], [1114, 77, 3, 20, "k"], [1088, 97, 19, 13, "g", 10], [1107, 97, 10, 13, "o"], [1052, 106, 25, 28, "o"], [1077, 106, 6, 7, "b"], [1077, 113, 11, 21, "k", 5, 0.3, "ng"], [1083, 106, 5, 16, "k"], [1088, 110, 29, 24, "o", 5, 0.3, "kkg"],
  [1052, 134, 28, 19, "k"], [1052, 153, 28, 9, "k", 7], [1080, 134, 22, 29, "o", 6], [1102, 134, 15, 29, "o", 3, 0.45, "ggk"], [1052, 163, 65, 11, "o", 5, 0.35, "gkR"],
  [1117, 0, 19, 35, "g"], [1136, 0, 22, 11, "o"], [1136, 11, 22, 24, "o", 4, 0.2, "ggR"], [1136, 28, 6, 7, "b"], [1117, 35, 41, 16, "k", 6], [1134, 42, 7, 8, "R"],
  [1117, 51, 41, 34, "o", 7], [1133, 63, 20, 20, "o", 2, 0.2, "gk"], [1117, 68, 7, 7, "R"], [1117, 75, 7, 5, "g"], [1141, 62, 4, 3, "b"], [1117, 85, 41, 16, "o", 4, 0.3, "kkb"],
  [1117, 101, 50, 41, "t", 3], [1167, 101, 8, 41, "t"], [1117, 142, 26, 32, "k", 12], [1143, 142, 32, 32, "k", 10],
  [1158, 0, 47, 42, "o", 3, 0.42, "ggbkR"], [1173, 17, 11, 12, "k"], [1173, 0, 6, 17, "b"], [1184, 17, 10, 8, "g"], [1205, 0, 27, 26, "o"], [1232, 0, 15, 26, "g", 3, 0.5, "ok"], [1238, 0, 7, 6, "b"], [1205, 26, 33, 16, "k", 9], [1238, 26, 9, 16, "o", 3, 0.4, "gk"],
  [1158, 42, 18, 18, "g", 9], [1176, 42, 18, 18, "k"], [1194, 42, 12, 18, "o", 5, 0.2, "g"], [1158, 60, 18, 14, "g", 4, 0.4, "oR"], [1176, 60, 30, 14, "k", 4, 0.4, "og"], [1206, 42, 12, 17, "g"], [1218, 42, 29, 25, "o", 5, 0.4, "bgkR"], [1229, 50, 7, 7, "b"], [1206, 59, 12, 8, "k"],
  [1158, 74, 15, 27, "R"], [1173, 74, 14, 27, "g", 4, 0.5, "Rol"], [1187, 74, 19, 16, "o"], [1187, 90, 19, 11, "k", 4, 0.5, "bgo"], [1206, 67, 30, 13, "o", 8], [1236, 67, 11, 13, "g", 4, 0.4, "o"], [1206, 76, 9, 5, "b"], [1206, 80, 15, 21, "k", 10], [1221, 80, 14, 11, "g"], [1221, 91, 14, 10, "g", 5], [1235, 80, 12, 21, "o", 4, 0.5, "kg"],
  [1175, 101, 23, 16, "k"], [1175, 117, 23, 16, "k", 12], [1185, 115, 12, 5, "o"], [1198, 101, 10, 32, "k", 3, 0.3, "bb"], [1208, 101, 39, 62, "v"],
  [1175, 133, 18, 23, "k", 6], [1193, 133, 15, 23, "k"], [1175, 156, 10, 14, "l"], [1185, 156, 7, 14, "p"], [1192, 156, 16, 8, "R", 8], [1175, 170, 17, 4, "o", 4, 0.4, "gb"], [1192, 164, 16, 10, "o", 4, 0.5, "lgk"],
  [1208, 163, 26, 11, "g"], [1234, 163, 8, 11, "p"], [1242, 163, 5, 11, "g"],
];

/* Broad light and shade of the directories; a directory listed twice is deeper. */
const SHADES: [number, number, number, number][] = [
  [0, 0, 249, 174], [249, 0, 129, 71], [249, 71, 65, 69], [249, 71, 65, 69], [314, 71, 64, 103], [378, 0, 41, 52], [419, 0, 43, 54],
  [378, 52, 84, 22], [378, 74, 82, 100], [462, 0, 63, 74], [460, 74, 78, 100], [538, 0, 80, 55], [538, 0, 80, 55], [538, 0, 80, 55],
  [538, 55, 80, 29], [538, 84, 63, 50], [538, 84, 63, 50], [538, 134, 63, 40], [538, 134, 63, 40], [601, 84, 70, 47], [601, 131, 70, 43],
  [618, 0, 53, 77], [618, 0, 53, 77], [671, 0, 58, 45], [671, 0, 58, 45], [671, 45, 58, 40], [671, 85, 58, 42], [671, 127, 58, 47],
  [729, 0, 18, 84], [729, 84, 18, 90], [844, 146, 97, 28],
  [941, 0, 111, 83], [941, 83, 111, 34], [941, 117, 111, 57], [1052, 0, 65, 77], [1052, 77, 65, 97], [1117, 0, 130, 101],
  [1117, 101, 58, 41], [1117, 142, 58, 32], [1117, 142, 58, 32],
];

function random(seed: number) {
  let s = seed;
  return () => {
    s = (s * 1664525 + 1013904223) >>> 0;
    return s / 4294967296;
  };
}

function TreeMap() {
  const drawn = useMemo(
    () =>
      BLOCKS.map(([x, y, w, h, hue, cell = 0, share = 0, others = ""], i) => {
        const rnd = random(i * 7919 + 17);
        const paths: Record<string, string> = {};
        let lines = "";
        let dim = "";
        if (cell) {
          const rows = Math.max(1, Math.round(h / cell));
          const stack = w < 14 && h > 150;
          for (let r = 0; r < rows; r++) {
            const y0 = Math.round((r * h) / rows);
            const y1 = Math.round(((r + 1) * h) / rows);
            const jitter = cell > 4 ? 0.75 + rnd() * 0.6 : 1;
            const cols = stack ? 1 : Math.max(1, Math.round(w / (cell * jitter)));
            for (let c = 0; c < cols; c++) {
              const x0 = Math.round((c * w) / cols);
              const x1 = Math.round(((c + 1) * w) / cols);
              const box = `M${x + x0} ${y + y0}H${x + x1}V${y + y1}H${x + x0}Z`;
              if (rnd() < share) {
                const key = others[Math.floor(rnd() * others.length)];
                paths[key] = (paths[key] ?? "") + box;
              } else if (cell > 2 && rnd() < 0.3) dim += box;
              /* the lower part of each cell falls into shade */
              if (cell > 4) dim += `M${x + x0} ${y + Math.ceil((y0 + y1) / 2 + 1)}H${x + x1}V${y + y1}H${x + x0}Z`;
              if (cell > 2) lines += `M${x + x1 - 1} ${y + y0}h1V${y + y1}H${x + x0}v-1H${x + x1 - 1}Z`;
            }
          }
          if (cell === 2)
            for (let k = 2; k < h; k += 3) lines += `M${x} ${y + k}h${w}v1h${-w}Z`;
        }
        return { x, y, w, h, hue, cell, paths, lines, dim };
      }),
    []
  );
  return (
    <svg viewBox="0 0 1247 174" preserveAspectRatio="none" shapeRendering="crispEdges" role="img" aria-label="C:\ 树图">
      <defs>
        <radialGradient id="cushion" cx="0.45" cy="0.5" r="0.75">
          <stop offset="0" stopColor="#000" stopOpacity="0" />
          <stop offset="0.3" stopColor="#000" stopOpacity="0.06" />
          <stop offset="1" stopColor="#000" stopOpacity="0.45" />
        </radialGradient>
        <radialGradient id="shade" cx="0.5" cy="0.58" r="0.75">
          <stop offset="0" stopColor="#000" stopOpacity="0" />
          <stop offset="0.35" stopColor="#000" stopOpacity="0.06" />
          <stop offset="1" stopColor="#000" stopOpacity="0.46" />
        </radialGradient>
      </defs>
      <rect width="1247" height="174" fill="#4a4a4a" />
      {drawn.map((b, i) => (
        <g key={i}>
          <rect x={b.x} y={b.y} width={b.w} height={b.h} fill={HUES[b.hue]} />
          {Object.entries(b.paths).map(([key, d]) => (
            <path key={key} d={d} fill={HUES[key]} />
          ))}
          {b.dim && <path d={b.dim} fill="#000" opacity="0.14" />}
          {b.lines && <path d={b.lines} fill="#000" opacity={b.cell > 4 ? 0.36 : b.cell > 2 ? 0.2 : 0.12} />}
          {b.h < 170 || b.w > 40 ? (
            <rect x={b.x} y={b.y} width={b.w} height={b.h} fill="url(#cushion)" opacity={b.cell && b.cell < 5 ? 0.3 : 1} />
          ) : null}
          {!b.cell && <path d={`M${b.x + b.w - 1} ${b.y}h1v${b.h}h${-b.w}v-1h${b.w - 1}Z`} fill="#000" opacity="0.3" />}
        </g>
      ))}
      {SHADES.map(([x, y, w, h], i) => (
        <rect key={i} x={x} y={y} width={w} height={h} fill="url(#shade)" />
      ))}
    </svg>
  );
}

/* ---------- panels ---------- */

function Percent({ value, indent, color }: { value: number; indent?: number; color: string }) {
  return (
    <BarCell $indent={indent}>
      <Bar>
        <BarFill $color={color} style={{ width: `${value >= 3 ? value : 0}%` }} />
        <BarText>{value.toFixed(1)} %</BarText>
      </Bar>
    </BarCell>
  );
}

function VerticalScroll({ thumb, rest }: { thumb: number; rest: number }) {
  return (
    <VScroll>
      <ScrollButton aria-label="向上"><Chevron dir="up" /></ScrollButton>
      <Thumb $grow={thumb} />
      <Rest $grow={rest} />
      <ScrollButton aria-label="向下"><Chevron dir="down" /></ScrollButton>
    </VScroll>
  );
}

function FolderPanel() {
  return (
    <Panel $grow={724}>
      <Viewport>
        <Grid>
          <colgroup>
            <col />
            <col width="125" />
            <col width="90" />
            <col width="90" />
            <col width="44" />
          </colgroup>
          <thead>
            <tr>
              <Head>文件夹</Head>
              <Head $right>父级百分比</Head>
              <Head $right>大小<Sort /></Head>
              <Head $right>分配</Head>
              <Head $right $pad={2}>项</Head>
            </tr>
          </thead>
          <tbody>
            {FOLDERS.map(([name, kind, pct, size, alloc, items], i) => (
              <tr key={name}>
                <TreeCell $child={i > 0}>
                  <TreeRow $dim={kind === "pale" || kind === "system"}>
                    <ToggleBox open={i === 0} />
                    <Dots />
                    <FolderIcon kind={kind} />
                    <span><Label text={name} /></span>
                  </TreeRow>
                </TreeCell>
                <Percent value={pct} indent={i ? 20 : 10} color={i === 0 || kind === "none" ? "#8c98ff" : "#7a90ff"} />
                <Cell $right><Num>{size}</Num></Cell>
                <Cell $right><Num>{alloc}</Num></Cell>
                <Cell $right $pad={18}><Num>{items}</Num></Cell>
              </tr>
            ))}
          </tbody>
        </Grid>
        <VerticalScroll thumb={182} rest={60} />
      </Viewport>
      <HScroll>
        <ScrollButton aria-label="向左"><Chevron dir="left" /></ScrollButton>
        <Thumb $grow={437} />
        <Rest $grow={232} />
        <ScrollButton aria-label="向右"><Chevron dir="right" /></ScrollButton>
      </HScroll>
    </Panel>
  );
}

function ExtensionPanel() {
  return (
    <Panel $grow={528}>
      <Viewport>
        <Grid>
          <colgroup>
            <col width="26" />
            <col width="70" />
            <col />
            <col width="60" />
            <col width="90" />
            <col width="90" />
            <col width="70" />
            <col width="20" />
          </colgroup>
          <thead>
            <tr>
              <Head aria-label="颜色" />
              <Head>扩展名</Head>
              <Head>文件类型</Head>
              <Head $right>百分比</Head>
              <Head $right>大小<Sort /></Head>
              <Head $right>分配</Head>
              <Head $right>文件</Head>
              <Head aria-label="滚动" />
            </tr>
          </thead>
          <tbody>
            {EXTS.map(([color, icon, ext, type, pct, size, alloc, files], i) => (
              <tr key={i}>
                <Cell $pad={3}><Swatch $color={color} /></Cell>
                <Cell $pad={8}>
                  <ExtRow><FileIcon kind={icon} />{ext}</ExtRow>
                </Cell>
                <Cell $pad={8}><Clip><Label text={type} /></Clip></Cell>
                <Percent value={pct} color="#9ca4ff" />
                <Cell $right><Num>{size}</Num></Cell>
                <Cell $right><Num>{alloc}</Num></Cell>
                <Cell $right><Num>{files}</Num></Cell>
                <Cell />
              </tr>
            ))}
          </tbody>
        </Grid>
        <VerticalScroll thumb={17} rest={241} />
        <Watermark>
          <svg width="54" height="44" viewBox="0 0 54 44">
            <defs>
              <linearGradient id="arrowFill" x1="0" x2="1">
                <stop offset="0" stopColor="#8ad0f4" />
                <stop offset="0.5" stopColor="#1c98d8" />
                <stop offset="1" stopColor="#1462b0" />
              </linearGradient>
            </defs>
            <path d="M16 1 H37 V10 H52 L27 33 L3 10 H16 Z" fill="url(#arrowFill)" />
            <path d="M16 27 L27 36 L21 43 H0 Z M38 27 L54 43 H34 L27 36 Z" fill="#86b81c" />
          </svg>
          <div>
            <MarkWords>下载集</MarkWords>
            <MarkSite>xzji.com</MarkSite>
          </div>
        </Watermark>
      </Viewport>
    </Panel>
  );
}

export default function App() {
  return (
    <Window>
      <Global />
      <TitleBar>
        <WizLogo size={17} />
        <TitleText><Label text={"[C:] 本地磁盘  - WizTree"} /></TitleText>
        <WinButton aria-label="最小化">
          <svg width="10" height="10" viewBox="0 0 10 10"><path d="M0 5.5 H10" stroke="#8a8a8a" /></svg>
        </WinButton>
        <WinButton aria-label="最大化">
          <svg width="10" height="10" viewBox="0 0 10 10"><rect x="0.5" y="0.5" width="9" height="9" fill="none" stroke="#8a8a8a" /></svg>
        </WinButton>
        <WinButton aria-label="关闭">
          <svg width="10" height="10" viewBox="0 0 10 10"><path d="M0 0 L10 10 M10 0 L0 10" stroke="#8a8a8a" /></svg>
        </WinButton>
      </TitleBar>
      <MenuBar>
        <MenuItem>文件</MenuItem>
        <MenuItem>选项</MenuItem>
      </MenuBar>
      <InfoStrip>
        <ScanPane>
          <ScanRow>
            <ScanLabel htmlFor="drive">选择:</ScanLabel>
            <SelectWrap>
              <DriveSelect id="drive" defaultValue="c">
                <option value="c">[C:] 本地磁盘</option>
              </DriveSelect>
              <SelectArrow width="10" height="7" viewBox="0 0 10 7" fill="none" stroke="#505050">
                <path d="M1 1 L5 5.5 L9 1" />
              </SelectArrow>
            </SelectWrap>
            <ScanButton>扫描</ScanButton>
          </ScanRow>
          <ScanStatus>扫描完成 2.67 秒</ScanStatus>
          <Progress role="progressbar" aria-valuenow={100} aria-label="扫描进度" />
        </ScanPane>
        <SpacePane>
          {SPACE.map(([label, value, extra]) => (
            <React.Fragment key={label}>
              <SpaceLabel>{label}</SpaceLabel>
              <SpaceValue $right>{value}</SpaceValue>
              <SpaceValue>{extra}</SpaceValue>
            </React.Fragment>
          ))}
        </SpacePane>
        <AboutPane>
          <WizLogo size={66} />
          <AboutText>
            <AboutTitle>WizTree v3.35 (64 位)</AboutTitle>
            <AboutLine as="div">© 2020 Antibody Software</AboutLine>
            <AboutLine href="#">www.wiztreefree.com</AboutLine>
          </AboutText>
          <DonatePane>
            <DonateButton>
              <DonateBadge />
              帮助我们使 WizTree 更好!
            </DonateButton>
            <DonateNote>(您可以通过捐赠, 隐藏捐赠按钮)</DonateNote>
          </DonatePane>
        </AboutPane>
      </InfoStrip>
      <Tabs role="tablist">
        <Tab role="tab" aria-selected $active>树查看</Tab>
        <Tab role="tab">文件查看</Tab>
        <Tab role="tab">关于</Tab>
      </Tabs>
      <Panels>
        <FolderPanel />
        <ExtensionPanel />
      </Panels>
      <Splitter />
      <PathLabel>[C:\]</PathLabel>
      <MapFrame>
        <TreeMap />
      </MapFrame>
      <StatusBar>
        <StatusCell />
        <StatusCell $wide />
      </StatusBar>
    </Window>
  );
}
